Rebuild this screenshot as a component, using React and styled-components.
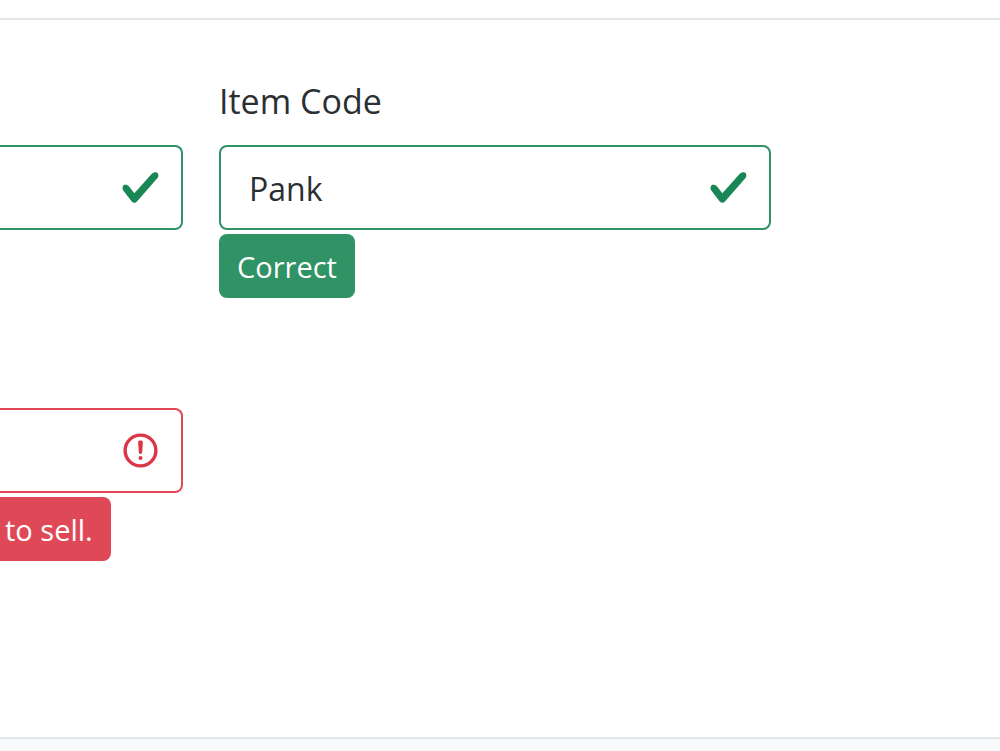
import { useState } from "react";
import styled, { createGlobalStyle, ThemeProvider } from "styled-components";

const theme = {
  colors: {
    white: "#ffffff",
    text: "#2b2f33",
    line: "#e3e5e9",
    footer: "#f8f9fa",
    valid: "#198754",
    invalid: "#dc3545",
    validSoft: "#2f9365",
    invalidSoft: "#df4957",
  },
};

const CheckIcon = () => (
  <svg viewBox="0 0 8 8" aria-hidden="true">
    <path
      fill={theme.colors.valid}
      d="M2.3 6.73.6 4.53c-.4-1.04.46-1.4 1.1-.8l1.1 1.4 3.4-3.8c.6-.63 1.6-.27 1.2.7l-4 4.6c-.43.5-.8.4-1.1.1z"
    />
  </svg>
);

const AlertIcon = () => (
  <svg
    viewBox="0 0 12 12"
    fill="none"
    stroke={theme.colors.invalid}
    aria-hidden="true"
  >
    <circle cx="6" cy="6" r="4.5" />
    <path strokeLinejoin="round" d="M5.8 3.6h.4L6 6.5z" />
    <circle cx="6" cy="8.2" r=".6" fill={theme.colors.invalid} stroke="none" />
  </svg>
);

const Field = ({ id, label, status, defaultValue = "", message, cut }) => {
  const [value, setValue] = useState(defaultValue);

  return (
    <FieldWrapper>
      <Control $status={status} $cut={cut}>
        <input
          id={id}
          type="text"
          aria-label={label}
          aria-invalid={status === "invalid"}
          value={value}
          onChange={e => setValue(e.target.value)}
        />
        {status === "valid" ? <CheckIcon /> : <AlertIcon />}
      </Control>
      {message && (
        <Tip $status={status} $cut={cut}>
          {message}
        </Tip>
      )}
    </FieldWrapper>
  );
};

const App = () => (
  <ThemeProvider theme={theme}>
    <GlobalStyle />
    <Page>
      <Header />
      <Form onSubmit={e => e.preventDefault()}>
        <Label htmlFor="itemCode">Item Code</Label>
        <Row>
          <Field id="itemName" label="Item Name" status="valid" cut />
          <Field
            id="itemCode"
            status="valid"
            defaultValue="Pank"
            message="Correct"
          />
        </Row>
        <Row>
          <Field
            id="quantity"
            label="Quantity"
            status="invalid"
            message="to sell."
            cut
          />
        </Row>
      </Form>
      <Footer />
    </Page>
  </ThemeProvider>
);

export default App;

const GlobalStyle = createGlobalStyle`
  * {
    box-sizing: border-box;
  }

  body {
    margin: 0;
    font-family: "Open Sans", "Noto Sans", sans-serif;
    color: ${theme.colors.text};
    background-color: ${theme.colors.white};
  }
`;

const Page = styled.div`
  display: flex;
  flex-direction: column;
  min-height: 100vh;
`;

const Header = styled.header`
  height: 20px;
  border-bottom: 2px solid ${({ theme }) => theme.colors.line};
`;

const Form = styled.form`
  flex: 1;
  display: flex;
  flex-direction: column;
  padding: 56px 0;
`;

const columns = `
  display: grid;
  grid-template-columns: 183fr 552fr 193fr;
  column-gap: 36px;
`;

const Row = styled.div`
  ${columns}

  & + & {
    margin-top: 110px;
  }
`;

const Label = styled.label`
  ${columns}
  margin-bottom: 19px;
  font-size: 34px;
  line-height: 50px;

  &::before {
    content: "";
  }
`;

const FieldWrapper = styled.div`
  display: flex;
  flex-direction: column;
  align-items: flex-start;
  gap: 4px;
  min-width: 0;
`;

const Control = styled.div`
  display: flex;
  align-items: center;
  width: 100%;
  height: 85px;
  padding: 0 20px 0 28px;
  border: 2px solid ${({ theme, $status }) => theme.colors[`${$status}Soft`]};
  border-radius: 8px;
  ${({ $cut }) =>
    $cut && "border-left: 0; border-radius: 0 8px 8px 0; padding-left: 0;"}

  input {
    flex: 1;
    min-width: 0;
    padding: 2px 0 0;
    border: 0;
    outline: 0;
    background: transparent;
    color: inherit;
    font-family: inherit;
    font-size: 32px;
    line-height: 50px;
  }

  svg {
    flex: none;
    width: 41px;
    height: 41px;
  }
`;

const Tip = styled.div`
  padding: 9px 18px 7px;
  border-radius: 8px;
  background-color: ${({ theme, $status }) => theme.colors[`${$status}Soft`]};
  color: ${({ theme }) => theme.colors.white};
  font-size: 29px;
  line-height: 48px;
  ${({ $cut }) => $cut && "padding-left: 5px; border-radius: 0 8px 8px 0;"}
`;

const Footer = styled.footer`
  height: 14px;
  border-top: 2px solid ${({ theme }) => theme.colors.line};
  background-color: ${({ theme }) => theme.colors.footer};
`;
